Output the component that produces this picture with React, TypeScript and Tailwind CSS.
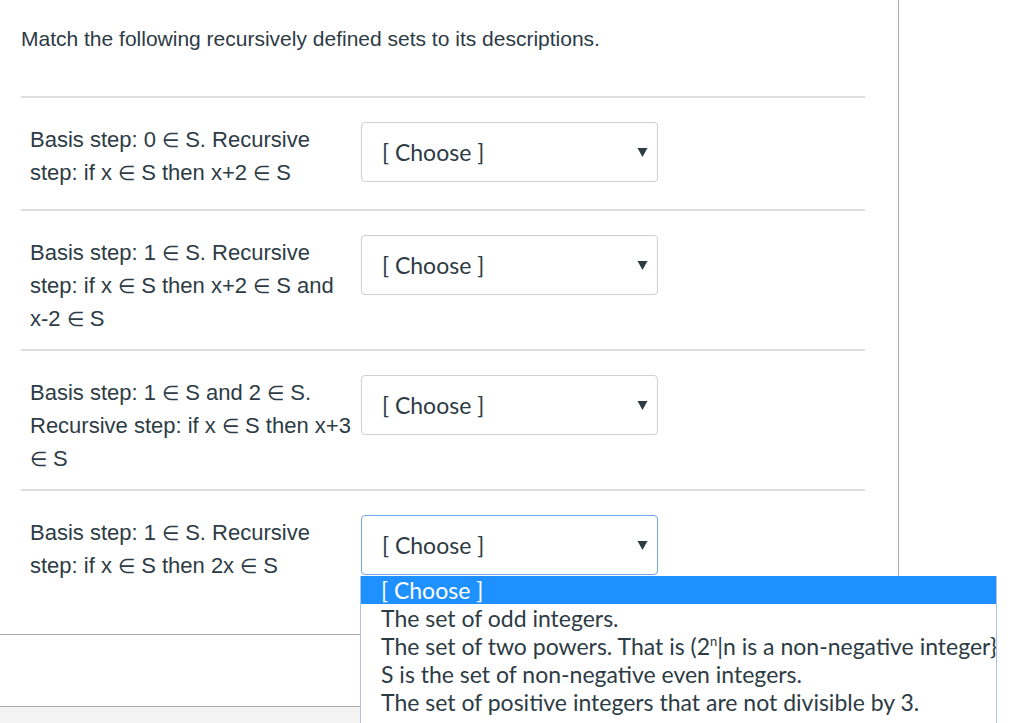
import React from "react";

const E = () => <span className="text-[20px] leading-none">∈</span>;

const rows: React.ReactNode[] = [
  <>Basis step: 0 <E /> S. Recursive step: if x <E /> S then x+2 <E /> S</>,
  <>Basis step: 1 <E /> S. Recursive step: if x <E /> S then x+2 <E /> S and <span className="whitespace-nowrap">x-2</span> <E /> S</>,
  <>Basis step: 1 <E /> S and 2 <E /> S. Recursive step: if x <E /> S then x+3 <E /> S</>,
  <>Basis step: 1 <E /> S. Recursive step: if x <E /> S then 2x <E /> S</>,
];

function Arrow() {
  return (
    <svg width="11" height="10" viewBox="0 0 11 10" className="shrink-0">
      <path d="M0.5 1 L10.5 1 L5.5 10 Z" fill="#2d3b45" />
    </svg>
  );
}

function Select({ focused, open }: { focused?: boolean; open?: boolean }) {
  return (
    <div className="relative">
      <div
        className={
          "w-[297px] h-[60px] rounded-[4px] bg-white flex items-center justify-between pl-[20px] pr-[9px] border " +
          (focused ? "border-[#6fa6ec]" : "border-[#cfcfcf]")
        }
      >
        <span className="text-[23px] text-[#2d3b45]" style={{ fontFamily: "Lato, 'Noto Sans', sans-serif" }}>
          [ Choose ]
        </span>
        <Arrow />
      </div>
      {open && (
        <div
          className="absolute left-[-1px] top-[61px] w-[637px] pb-[20px] bg-white border-l border-r border-[#a9c3ea] z-10 overflow-hidden whitespace-nowrap text-[23px] leading-[28px] text-[#2d3b45]"
          style={{ fontFamily: "Lato, 'Noto Sans', sans-serif" }}
        >
          <div className="bg-[#1e90ff] text-white pl-[20px] h-[28px]">[ Choose ]</div>
          <div className="pl-[20px] h-[28px]">The set of odd integers.</div>
          <div className="pl-[20px] h-[28px]">
            The set of two powers. That is (2
            <span className="relative top-[-9px] text-[13px] leading-none">n</span>
            {"|n is a non-negative integer}"}
          </div>
          <div className="pl-[20px] h-[28px]">S is the set of non-negative even integers.</div>
          <div className="pl-[20px] h-[28px]">The set of positive integers that are not divisible by 3.</div>
        </div>
      )}
    </div>
  );
}

export default function App() {
  return (
    <div
      className="h-[723px] w-[1024px] overflow-hidden bg-white text-[#2d3b45]"
      style={{ fontFamily: "'Liberation Sans', Arial, sans-serif" }}
    >
      <div className="w-[899px]">
        <div className="h-[635px] border-r border-b border-[#ababab] pl-[21px] pt-[26px]">
          <p className="text-[21px] leading-[26px]">Match the following recursively defined sets to its descriptions.</p>
          <div className="w-[844px] mt-[44px]">
            {rows.map((r, i) => (
              <div key={i} className="border-t-2 border-[#dedede] flex items-start pl-[9px] pt-[25px] pb-[14px]">
                <div className="w-[331px] text-[22px] leading-[33px]">{r}</div>
                <div className="mt-[-1px] mb-[13px]">
                  <Select focused={i === 3} open={i === 3} />
                </div>
              </div>
            ))}
          </div>
        </div>
        <div className="h-[71px]" />
        <div className="h-[20px] border-t border-[#ababab] bg-[#f3f3f3]" />
      </div>
    </div>
  );
}
